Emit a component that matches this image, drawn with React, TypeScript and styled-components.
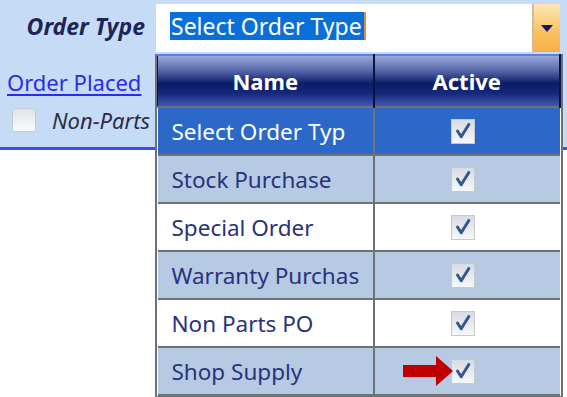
import React from "react";
import styled, { createGlobalStyle } from "styled-components";

const GlobalStyle = createGlobalStyle`
    body {
        margin: 0;
        background: #ffffff;
        font-family: "Noto Sans", "Open Sans", sans-serif;
    }
`;

const Page = styled.div`
    position: relative;
    width: 567px;
    height: 397px;
    overflow: hidden;
    background: #ffffff;
`;

const Band = styled.div`
    display: flex;
    height: 147px;
    background: #c6dcf6;
    border-bottom: 3px solid #3a4ff2;
`;

const LeftPane = styled.div`
    width: 156px;
    flex-shrink: 0;
    display: flex;
    flex-direction: column;
`;

const TypeLabel = styled.div`
    height: 67px;
    box-sizing: border-box;
    padding: 10px 11px 0 0;
    text-align: right;
    font-size: 23px;
    line-height: 32px;
    font-weight: 700;
    font-style: italic;
    color: #1e2457;
    white-space: nowrap;
`;

const PlacedLink = styled.a`
    margin-left: 7px;
    font-size: 22px;
    line-height: 30px;
    color: #2a2af0;
    text-decoration: underline;
    text-underline-offset: 3px;
    white-space: nowrap;
`;

const CheckRow = styled.div`
    display: flex;
    align-items: center;
    gap: 16px;
    height: 30px;
    margin: 8px 0 0 12px;
    white-space: nowrap;
`;

const EmptyBox = styled.span`
    width: 22px;
    height: 22px;
    border: 1px solid #c4c8d0;
    border-radius: 3px;
    background: linear-gradient(#dfe2e7, #fbfbfc);
    flex-shrink: 0;
`;

const NonParts = styled.span`
    font-size: 22px;
    font-style: italic;
    color: #2b2d45;
`;

const Combo = styled.div`
    margin-top: 4px;
    width: 404px;
    height: 48px;
    display: flex;
    background: #ffffff;
`;

const ComboText = styled.div`
    flex: 1;
    padding: 8px 0 0 14px;
    white-space: nowrap;
`;

const Highlight = styled.span`
    display: inline-block;
    background: #0a6fd8;
    color: #ffffff;
    font-size: 23px;
    line-height: 28px;
    padding: 0 2px 0 1px;
    border-right: 2px solid #e08a40;
`;

const DropButton = styled.div`
    width: 26px;
    border-left: 2px solid #cdbf94;
    background: linear-gradient(#fde7b8, #fbc060 60%, #f8ae47);
    display: flex;
    align-items: center;
    justify-content: center;
`;

const Popup = styled.div`
    position: absolute;
    left: 155px;
    top: 54px;
    width: 408px;
    border: 2px solid #6f7175;
    border-top: none;
    box-sizing: border-box;
    background: #ffffff;
`;

const Table = styled.table`
    width: 100%;
    border-collapse: collapse;
    table-layout: fixed;
`;

const Head = styled.th`
    height: 50px;
    padding: 0;
    font-size: 22px;
    font-weight: 700;
    color: #ffffff;
    text-align: center;
    background: linear-gradient(
        #9aa7da 0%,
        #5a6bad 28%,
        #0c1c66 55%,
        #15287c 75%,
        #4058b0 100%
    );
    border-top: 2px solid #5f7fe0;
    border-left: 1px solid #0b1340;
    border-right: 2px solid #0b1340;
    border-bottom: 1px solid #0b1340;
`;

const Row = styled.tr<{ $tone: "selected" | "shaded" | "plain" }>`
    height: 48px;
    background: ${({ $tone }) =>
        $tone === "selected" ? "#2b68c8" : $tone === "shaded" ? "#b6cae3" : "#ffffff"};
    color: ${({ $tone }) => ($tone === "selected" ? "#ffffff" : "#28337c")};
`;

const NameCell = styled.td`
    padding: 0 0 0 14px;
    font-size: 22.5px;
    white-space: nowrap;
    overflow: hidden;
    border: 2px solid #6f7175;
    border-left: none;
`;

const ActiveCell = styled.td`
    padding: 0 8px 0 0;
    text-align: center;
    border: 2px solid #6f7175;
    border-right: none;
    position: relative;
`;

const CheckBox = styled.span`
    display: inline-flex;
    align-items: center;
    justify-content: center;
    width: 24px;
    height: 25px;
    vertical-align: middle;
    box-sizing: border-box;
    border: 1px solid #c4c9d2;
    background: linear-gradient(#d8dce3, #f6f7f9);
`;

const Arrow = styled.svg`
    position: absolute;
    left: 28px;
    top: 8px;
`;

const items = [
    { name: "Select Order Typ", tone: "selected" as const },
    { name: "Stock Purchase", tone: "shaded" as const },
    { name: "Special Order", tone: "plain" as const },
    { name: "Warranty Purchas", tone: "shaded" as const },
    { name: "Non Parts PO", tone: "plain" as const },
    { name: "Shop Supply", tone: "shaded" as const, marked: true },
];

function Tick() {
    return (
        <CheckBox>
            <svg width="18" height="18" viewBox="0 0 18 18">
                <path
                    d="M3.5 9 L7.2 14.8 L14.8 2.5"
                    fill="none"
                    stroke="#35568c"
                    strokeWidth="3"
                    strokeLinecap="round"
                    strokeLinejoin="round"
                />
            </svg>
        </CheckBox>
    );
}

function App() {
    return (
        <Page>
            <GlobalStyle />
            <Band>
                <LeftPane>
                    <TypeLabel>Order Type</TypeLabel>
                    <PlacedLink href="#">Order Placed</PlacedLink>
                    <CheckRow>
                        <EmptyBox />
                        <NonParts>Non-Parts PO</NonParts>
                    </CheckRow>
                </LeftPane>
                <Combo>
                    <ComboText>
                        <Highlight>Select Order Type</Highlight>
                    </ComboText>
                    <DropButton>
                        <svg width="12" height="7" viewBox="0 0 12 7">
                            <path d="M0 0 H12 L6 7 Z" fill="#12185a" />
                        </svg>
                    </DropButton>
                </Combo>
            </Band>
            <Popup>
                <Table>
                    <colgroup>
                        <col style={{ width: "216px" }} />
                        <col />
                    </colgroup>
                    <thead>
                        <tr>
                            <Head>Name</Head>
                            <Head>Active</Head>
                        </tr>
                    </thead>
                    <tbody>
                        {items.map((item) => (
                            <Row key={item.name} $tone={item.tone}>
                                <NameCell>{item.name}</NameCell>
                                <ActiveCell>
                                    {item.marked && (
                                        <Arrow width="50" height="30" viewBox="0 0 50 30">
                                            <path
                                                d="M0 9 H33 V0 L50 15 L33 30 V21 H0 Z"
                                                fill="#c00000"
                                            />
                                        </Arrow>
                                    )}
                                    <Tick />
                                </ActiveCell>
                            </Row>
                        ))}
                    </tbody>
                </Table>
            </Popup>
        </Page>
    );
}

export default App;
